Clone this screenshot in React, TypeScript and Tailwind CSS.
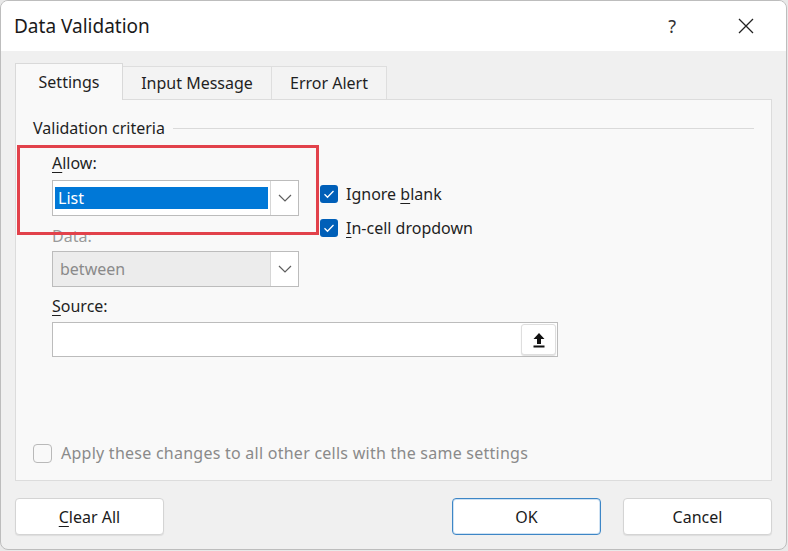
import React from "react";

const font = { fontFamily: '"Noto Sans", "Segoe UI", sans-serif' };

function Chevron({ className = "" }: { className?: string }) {
  return (
    <svg width="14" height="8" viewBox="0 0 14 8" className={className}>
      <path d="M1 1l6 6 6-6" fill="none" stroke="#5f5f5f" strokeWidth="1.2" />
    </svg>
  );
}

function Check() {
  return (
    <div className="flex h-[18px] w-[18px] items-center justify-center rounded-[3px] bg-[#005fb8]">
      <svg width="12" height="10" viewBox="0 0 12 10">
        <path d="M1.5 5.2l3 3L10.5 2" fill="none" stroke="#fff" strokeWidth="1.3" />
      </svg>
    </div>
  );
}

function U({ children }: { children: React.ReactNode }) {
  return <span className="underline underline-offset-[3px] decoration-1">{children}</span>;
}

function Select({ value, active }: { value: string; active?: boolean }) {
  return (
    <div
      className={`flex h-[36px] w-[247px] border border-[#bcbcbc] ${
        active ? "bg-white" : "bg-[#ececec]"
      }`}
    >
      <div className="flex flex-1 items-center px-[2px]">
        {active ? (
          <div className="flex h-[22px] w-full items-center bg-[#0078d7] pl-[3px] text-[16px] text-white">
            {value}
          </div>
        ) : (
          <div className="pl-[5px] text-[16px] text-[#8a8a8a]">{value}</div>
        )}
      </div>
      <div className="flex w-[28px] items-center justify-center border-l border-[#d6d6d6] bg-white">
        <Chevron />
      </div>
    </div>
  );
}

function Button({
  children,
  primary,
}: {
  children: React.ReactNode;
  primary?: boolean;
}) {
  return (
    <div
      className={`flex h-[37px] w-[149px] items-center justify-center rounded-[4px] bg-white text-[16px] text-[#1b1b1b] ${
        primary
          ? "border border-[#3d86c6] shadow-[inset_0_0_0_1px_#cfe2f3]"
          : "border border-[#d4d4d4] shadow-[0_1px_1px_rgba(0,0,0,0.08)]"
      }`}
    >
      {children}
    </div>
  );
}

export default function App() {
  return (
    <div className="relative h-[551px] w-[788px] bg-[#e9e9e9]" style={font}>
      <div className="flex h-[550px] w-[787px] flex-col overflow-hidden rounded-[8px] border border-[#bdbdbd] bg-[#f0f0f0]">
        {/* Title bar */}
        <div className="flex h-[50px] shrink-0 items-center bg-white pl-[13px]">
          <div className="flex-1 text-[19px] text-[#1a1a1a]">Data Validation</div>
          <div className="mr-[61px] text-[18px] text-[#333]">?</div>
          <svg width="18" height="18" viewBox="0 0 18 18" className="mr-[31px]">
            <path d="M2 2l14 14M16 2L2 16" stroke="#222" strokeWidth="1.3" />
          </svg>
        </div>

        <div className="flex flex-1 flex-col px-[14px]">
          {/* Tabs */}
          <div className="mt-[12px] flex h-[36px] items-end text-[16px] text-[#1f1f1f]">
            <div className="relative z-10 -mb-px flex h-[37px] w-[108px] items-center justify-center border border-b-0 border-[#d9d9d9] bg-[#f9f9f9]">
              Settings
            </div>
            <div className="flex h-[33px] w-[149px] items-center justify-center border border-b-0 border-l-0 border-[#dedede] bg-[#f3f3f3]">
              Input Message
            </div>
            <div className="flex h-[33px] w-[115px] items-center justify-center border border-b-0 border-l-0 border-[#dedede] bg-[#f3f3f3]">
              Error Alert
            </div>
          </div>

          {/* Panel */}
          <div className="flex h-[382px] flex-col border border-[#dcdcdc] bg-[#f9f9f9] px-[17px] pt-[17px] text-[16px] text-[#1f1f1f]">
            <div className="flex h-[22px] items-center gap-[8px]">
              <span>Validation criteria</span>
              <div className="h-px flex-1 bg-[#dadada]" />
            </div>

            <div className="ml-[19px] mt-[13px] flex">
              <div className="flex w-[247px] flex-col">
                <div className="h-[22px] leading-[22px]">
                  <U>A</U>llow:
                </div>
                <div className="mt-[6px]">
                  <Select value="List" active />
                </div>
                <div className="mt-[9px] h-[22px] leading-[22px] text-[#9a9a9a]">Data:</div>
                <div className="mt-[4px]">
                  <Select value="between" />
                </div>
              </div>
              <div className="ml-[21px] flex flex-col gap-[12px] pt-[31px]">
                <div className="flex h-[22px] items-center gap-[8px]">
                  <Check />
                  <span>
                    Ignore <U>b</U>lank
                  </span>
                </div>
                <div className="flex h-[22px] items-center gap-[8px]">
                  <Check />
                  <span>
                    <U>I</U>n-cell dropdown
                  </span>
                </div>
              </div>
            </div>

            <div className="ml-[19px] mt-[8px] h-[22px] leading-[22px]">
              <U>S</U>ource:
            </div>
            <div className="ml-[19px] mt-[5px] flex h-[35px] w-[506px] items-center justify-end border border-[#bcbcbc] bg-white pr-[1px]">
              <div className="flex h-[31px] w-[35px] items-center justify-center rounded-[3px] border border-[#dedede] bg-white shadow-[0_1px_1px_rgba(0,0,0,0.12)]">
                <svg width="14" height="16" viewBox="0 0 14 16">
                  <path d="M7 1L1.5 7h3.5v5h4V7h3.5z" fill="#111" />
                  <rect x="1.5" y="13.5" width="11" height="2" fill="#111" />
                </svg>
              </div>
            </div>

            <div className="mt-[85px] flex h-[22px] items-center gap-[9px] text-[#8a8a8a]">
              <div className="h-[19px] w-[19px] rounded-[4px] border border-[#b9b9b9] bg-[#f9f9f9]" />
              <span className="tracking-[0.25px]">
                Apply these changes to all other cells with the same settings
              </span>
            </div>
          </div>

          {/* Buttons */}
          <div className="mt-[17px] flex">
            <Button>
              <U>C</U>lear All
            </Button>
            <div className="flex-1" />
            <Button primary>OK</Button>
            <div className="w-[22px]" />
            <Button>Cancel</Button>
          </div>
        </div>
      </div>

      {/* Annotation box */}
      <div className="pointer-events-none absolute left-[17px] top-[145px] h-[90px] w-[302px] border-[3px] border-[#e2424b]" />
    </div>
  );
}
